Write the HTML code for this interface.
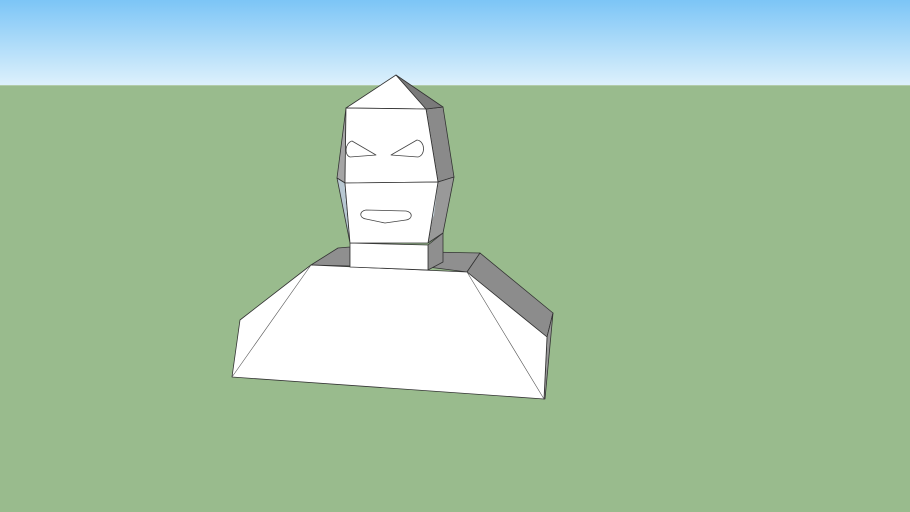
<!DOCTYPE html>
<html><head><meta charset="utf-8"><style>html,body{margin:0;padding:0;width:910px;height:512px;overflow:hidden;background:#99bb8d}</style></head>
<body>
<svg width="910" height="512" viewBox="0 0 910 512" xmlns="http://www.w3.org/2000/svg">
<defs><linearGradient id="sky" x1="0" y1="0" x2="0" y2="1"><stop offset="0" stop-color="#7cc5f6"/><stop offset="1" stop-color="#def1fc"/></linearGradient></defs>
<rect x="0" y="0" width="910" height="86" fill="url(#sky)"/>
<rect x="0" y="85" width="910" height="2" fill="#b2ccab"/>
<rect x="0" y="86" width="910" height="426" fill="#99bb8d"/>
<g stroke="#333" stroke-width="0.8" stroke-linejoin="round">
<!-- shoulders top gray -->
<polygon points="311,265 338,248 350,247 350,266" fill="#8f8f8f"/>
<polygon points="428,252 480,253 467,272 428,267" fill="#8f8f8f"/>
<!-- right side gray -->
<polygon points="480,253 553,313 547,337 467,272" fill="#8c8c8c"/>
<polygon points="553,313 545,399 544,399 547,337" fill="#999"/>
<!-- body front -->
<polygon points="311,265 467,272 547,337 544,399 232,377 240,320" fill="#fff"/>
<line x1="311" y1="265" x2="232" y2="377" stroke="#555" stroke-width="0.6"/>
<line x1="467" y1="272" x2="544" y2="399" stroke="#555" stroke-width="0.6"/>
<!-- neck -->
<polygon points="428,245 443,233 443,262 428,270" fill="#8f8f8f"/>
<polygon points="350,243 428,245 428,270 350,267" fill="#fff"/>
<!-- head right side -->
<polygon points="426,109 443,107 454,177 438,182" fill="#8a8a8a"/>
<polygon points="438,182 454,177 443,233 428,243" fill="#999"/>
<polygon points="426,186 438,182 434,215 428,230" fill="#c7d8e2" stroke="none"/>
<!-- head left sliver -->
<polygon points="346,108 337,178 345,183" fill="#a5a5a5"/>
<polygon points="337,178 345,183 350,243" fill="#b8c8d2"/>
<!-- head top -->
<polygon points="396,75 346,108 426,109" fill="#fff"/>
<polygon points="396,75 426,109 443,107" fill="#7a7a7a"/>
<!-- face -->
<polygon points="346,108 426,109 438,182 345,183" fill="#fff"/>
<polygon points="345,183 438,182 428,243 350,243" fill="#fff"/>
<!-- eyes -->
<path d="M352,141 C345,143 344,155 350,157 L376,155 Z" fill="#fff" stroke="#444"/>
<path d="M417,140 C425,141 426,155 418,157 L391,155 Z" fill="#fff" stroke="#444"/>
<!-- mouth -->
<path d="M366,210 L406,211 C413,212 413,219 406,220 L385,223 L366,219 C359,218 359,211 366,210 Z" fill="#fff" stroke="#444"/>
</g>
</svg>
</body></html>
